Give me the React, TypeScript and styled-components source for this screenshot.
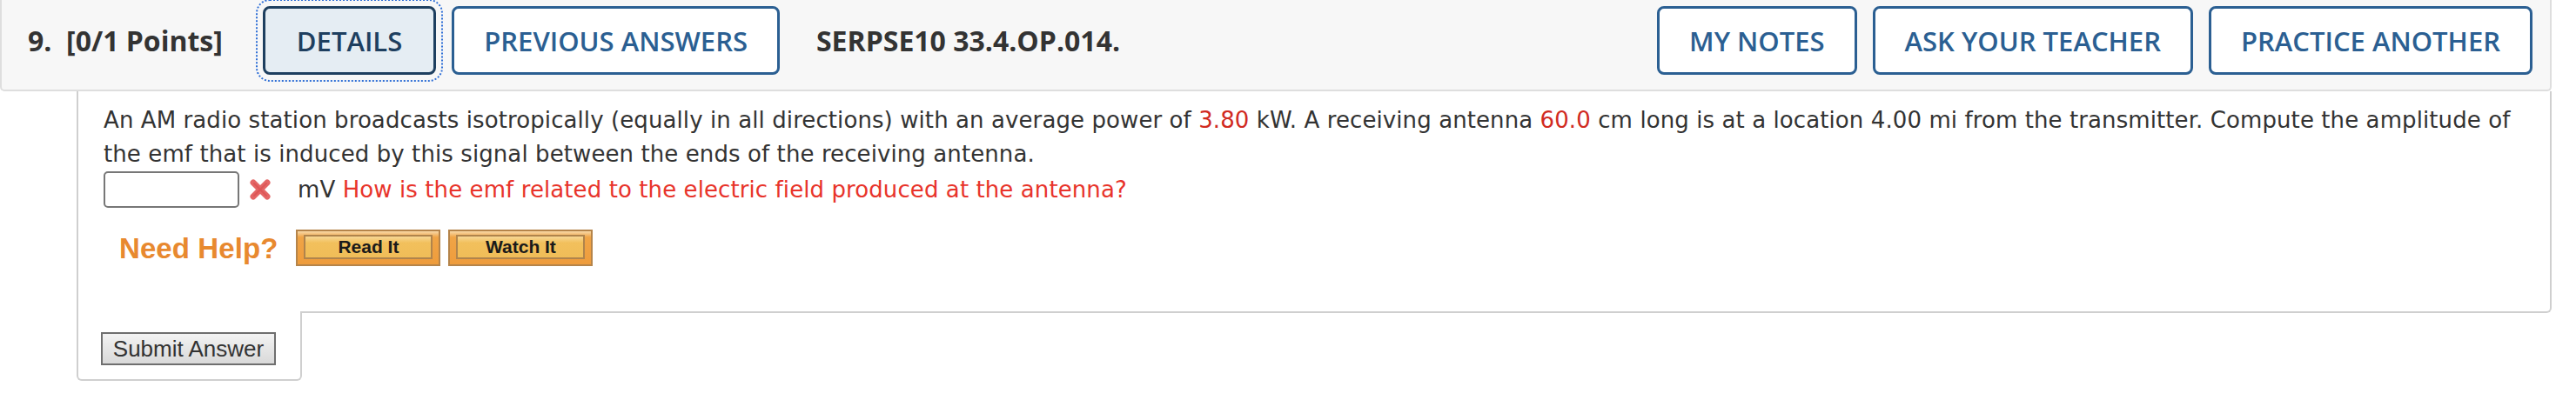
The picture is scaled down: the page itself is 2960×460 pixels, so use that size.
import styled, { createGlobalStyle } from 'styled-components';

const GlobalStyle = createGlobalStyle`
  * { box-sizing: border-box; }
  body {
    margin: 0;
    background: #fff;
  }
`;

const Page = styled.div`
  width: 2932px;
`;

const Header = styled.div`
  display: flex;
  align-items: center;
  height: 105px;
  padding: 0 20px 10px 30px;
  background: #f7f7f7;
  border: 2px solid #dedede;
  border-top: none;
  border-radius: 0 0 5px 5px;
  font-family: 'Open Sans', sans-serif;
  color: #333;
`;

const Points = styled.span`
  font-size: 32px;
  font-weight: 700;
  margin-right: 46px;
  white-space: pre;
`;

const Reference = styled.span`
  font-size: 32px;
  font-weight: 700;
  margin-left: 42px;
`;

const Spacer = styled.div`
  flex: 1;
`;

const ButtonGroup = styled.div<{ $offset?: number }>`
  display: flex;
  gap: 18px;
  margin-left: ${(p) => p.$offset ?? 0}px;
`;

const TabButton = styled.button<{ $active?: boolean }>`
  height: 79px;
  padding: 0 ${(p) => (p.$active ? 36 : 34)}px;
  border: 3px solid ${(p) => (p.$active ? '#1e3f5f' : '#2b5f92')};
  border-radius: 8px;
  background: ${(p) => (p.$active ? '#e5edf3' : '#fff')};
  color: ${(p) => (p.$active ? '#1e3f5f' : '#2b5f92')};
  font-family: 'Open Sans', sans-serif;
  font-size: 31px;
  font-weight: 600;
  cursor: pointer;
  outline: ${(p) => (p.$active ? '2px dotted #2f6fd6' : 'none')};
  outline-offset: 6px;
`;

const QuestionBox = styled.div`
  margin-left: 88px;
  padding: 14px 30px 52px 29px;
  border: 2px solid #cfcfcf;
  border-top: none;
  border-radius: 0 0 6px 0;
  font-family: 'DejaVu Sans', Verdana, sans-serif;
  font-size: 26px;
  line-height: 39px;
  letter-spacing: 0.09px;
  color: #333;
`;

const Prompt = styled.div`
  white-space: nowrap;
`;

const Value = styled.span`
  color: #d12a1f;
`;

const AnswerRow = styled.div`
  display: flex;
  align-items: center;
  height: 42px;
`;

const AnswerInput = styled.input`
  width: 156px;
  height: 42px;
  border: 2px solid #777;
  border-radius: 5px;
  background: #fff;
`;

const WrongMark = styled.svg`
  width: 26px;
  height: 26px;
  margin-left: 11px;
`;

const Unit = styled.span`
  margin-left: 30px;
  white-space: pre;
`;

const Hint = styled.span`
  color: #e8342b;
`;

const HelpRow = styled.div`
  display: flex;
  align-items: center;
  gap: 9px;
  margin-top: 25px;
  padding-left: 18px;
`;

const HelpLabel = styled.span`
  margin-right: 12px;
  font-family: 'Liberation Sans', Arial, sans-serif;
  font-size: 33px;
  font-weight: 700;
  color: #e8892f;
`;

const HelpButton = styled.button`
  width: 166px;
  height: 42px;
  padding: 4px 7px 6px 7px;
  border: 2px solid #b5844a;
  background: linear-gradient(#f8d9a8 0%, #f0a446 18%, #ee9c3c 100%);
  cursor: pointer;
`;

const HelpFace = styled.span`
  display: flex;
  align-items: center;
  justify-content: center;
  height: 100%;
  border: 2px solid #b0844c;
  background: linear-gradient(#f7d796 0%, #f2c05c 30%, #f0bd58 100%);
  font-family: 'Liberation Sans', Arial, sans-serif;
  font-size: 21px;
  font-weight: 700;
  color: #1a1a1a;
`;

const SubmitTab = styled.div`
  width: 259px;
  margin-left: 88px;
  margin-top: -2px;
  padding: 24px 0 16px 26px;
  background: #fff;
  border: 2px solid #cfcfcf;
  border-top: none;
  border-radius: 0 0 6px 6px;
`;

const SubmitButton = styled.button`
  display: block;
  width: 201px;
  height: 38px;
  padding: 0;
  border: 2px solid #6f6f6f;
  background: linear-gradient(#f3f3f3, #d9d9d9);
  font-family: 'Liberation Sans', Arial, sans-serif;
  font-size: 26px;
  color: #333;
  cursor: pointer;
`;

function CrossIcon() {
  return (
    <WrongMark viewBox="0 0 26 26">
      <path d="M5 5 L21 21 M21 5 L5 21" stroke="#e46666" strokeWidth="7" strokeLinecap="round" />
      <path d="M6 6 L20 20 M20 6 L6 20" stroke="#d84848" strokeWidth="2" strokeLinecap="round" opacity="0.5" />
    </WrongMark>
  );
}

export default function App() {
  return (
    <Page>
      <GlobalStyle />
      <Header>
        <Points>9.  [0/1 Points]</Points>
        <TabButton $active>DETAILS</TabButton>
        <ButtonGroup $offset={18}>
          <TabButton>PREVIOUS ANSWERS</TabButton>
        </ButtonGroup>
        <Reference>SERPSE10 33.4.OP.014.</Reference>
        <Spacer />
        <ButtonGroup>
          <TabButton>MY NOTES</TabButton>
          <TabButton>ASK YOUR TEACHER</TabButton>
          <TabButton>PRACTICE ANOTHER</TabButton>
        </ButtonGroup>
      </Header>

      <QuestionBox>
        <Prompt>
          An AM radio station broadcasts isotropically (equally in all directions) with an average power of{' '}
          <Value>3.80</Value> kW. A receiving antenna <Value>60.0</Value> cm long is at a location 4.00 mi from the
          transmitter. Compute the amplitude of
          <br />
          the emf that is induced by this signal between the ends of the receiving antenna.
        </Prompt>
        <AnswerRow>
          <AnswerInput type="text" />
          <CrossIcon />
          <Unit>
            mV <Hint>How is the emf related to the electric field produced at the antenna?</Hint>
          </Unit>
        </AnswerRow>
        <HelpRow>
          <HelpLabel>Need Help?</HelpLabel>
          <HelpButton>
            <HelpFace>Read It</HelpFace>
          </HelpButton>
          <HelpButton>
            <HelpFace>Watch It</HelpFace>
          </HelpButton>
        </HelpRow>
      </QuestionBox>

      <SubmitTab>
        <SubmitButton>Submit Answer</SubmitButton>
      </SubmitTab>
    </Page>
  );
}
